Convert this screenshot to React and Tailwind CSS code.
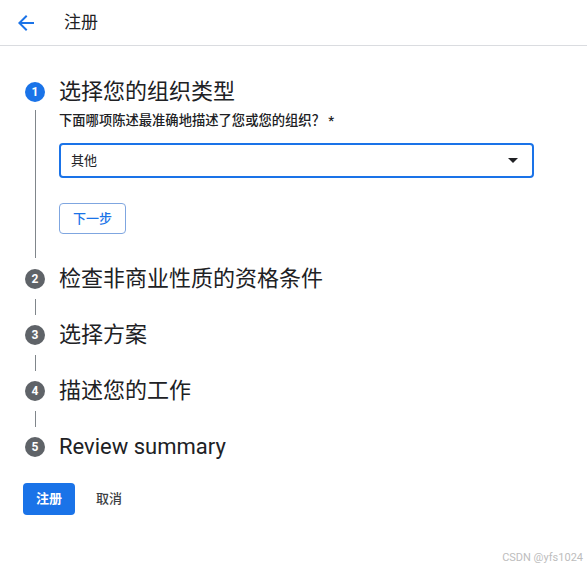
import React from 'react';

const FONT = { fontFamily: 'Roboto, "Noto Sans CJK SC", "Noto Sans", sans-serif' };

const StepCircle = ({ n, active }) => (
  <div
    className={`mt-1 flex h-5 w-5 shrink-0 items-center justify-center rounded-full text-[12px] font-bold text-white ${
      active ? 'bg-[#1a73e8]' : 'bg-[#5f6368]'
    }`}
  >
    {n}
  </div>
);

const Step = ({ n, title, last }) => (
  <div className="flex">
    <div className="flex w-[45px] flex-col items-center pl-[25px]">
      <StepCircle n={n} />
      {!last && <div className="mt-[10px] h-4 w-px bg-[#80868b]" />}
    </div>
    <div className={`pl-[14px] text-[22px] leading-[28px] text-[#202124] ${last ? '' : 'pb-[28px]'}`}>{title}</div>
  </div>
);

export default function App() {
  return (
    <div className="relative h-[571px] w-[587px] bg-white" style={FONT}>
      {/* header */}
      <div className="flex h-[46px] items-center border-b border-[#dadce0]">
        <svg width="24" height="24" viewBox="0 0 24 24" className="ml-[14px] mt-[1px]" fill="#1a73e8">
          <path d="M20 11H7.83l5.59-5.59L12 4l-8 8 8 8 1.41-1.41L7.83 13H20v-2z" />
        </svg>
        <span className="ml-[26px] text-[17px] text-[#202124]">注册</span>
      </div>

      <div className="pt-[32px]">
        {/* step 1 */}
        <div className="flex">
          <div className="flex w-[45px] flex-col items-center pl-[25px]">
            <StepCircle n={1} active />
            <div className="mb-[7px] mt-2 w-px flex-1 bg-[#80868b]" />
          </div>
          <div className="flex-1 pb-[31px] pl-[14px] pr-[53px]">
            <div className="text-[22px] leading-[28px] text-[#202124]">选择您的组织类型</div>
            <div className="mt-[5px] text-[13.3px] font-medium leading-5 text-[#202124]">
              下面哪项陈述最准确地描述了您或您的组织？ *
            </div>
            <div className="mt-3 flex h-[35px] items-center justify-between rounded border-2 border-[#1a73e8] pl-[10px] pr-[14px]">
              <span className="text-[13px] text-[#202124]">其他</span>
              <svg width="10" height="5" viewBox="0 0 10 5" fill="#202124">
                <path d="M0 0h10L5 5z" />
              </svg>
            </div>
            <button className="mt-[25px] h-[31px] w-[67px] rounded border border-[#7fa6e0] text-[13px] font-medium text-[#1a73e8]">
              下一步
            </button>
          </div>
        </div>

        <Step n={2} title="检查非商业性质的资格条件" />
        <Step n={3} title="选择方案" />
        <Step n={4} title="描述您的工作" />
        <Step n={5} title="Review summary" last />

        <div className="mt-[22px] flex items-center pl-[23px]">
          <button className="h-8 w-[52px] rounded bg-[#1a73e8] text-[13px] font-bold text-white">注册</button>
          <button className="ml-[21px] text-[13px] font-medium text-[#3c4043]">取消</button>
        </div>
      </div>

      <div className="absolute bottom-[5px] right-[4px] text-[11px] text-[#bdbdbd]">CSDN @yfs1024</div>
    </div>
  );
}
